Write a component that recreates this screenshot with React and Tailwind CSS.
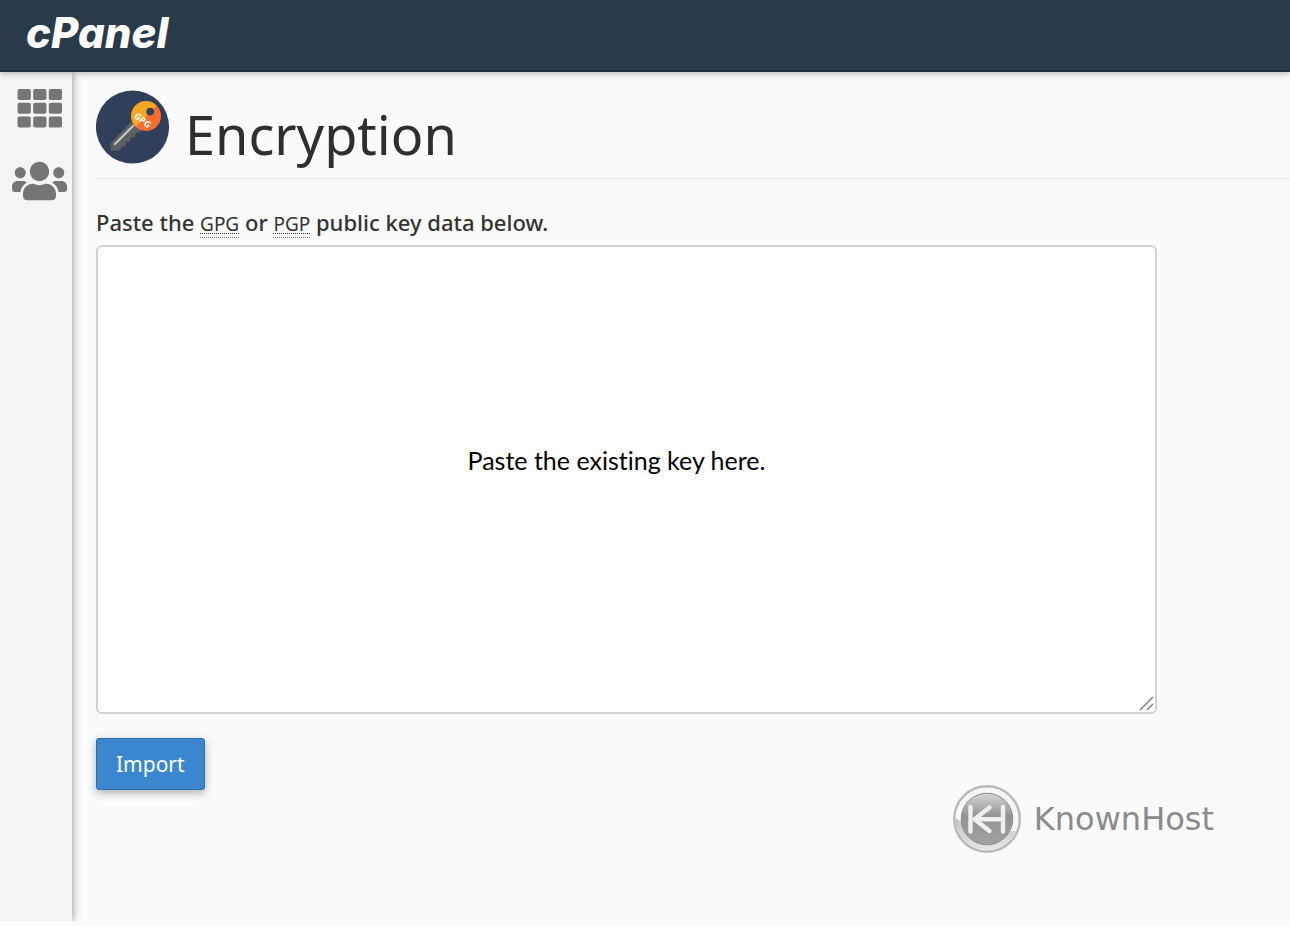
import { useState } from "react";
import { FaUsers } from "react-icons/fa";

export default function App() {
  return (
    <div className="min-h-screen flex flex-col bg-[#fcfcfc] pb-[5px] font-['Noto_Sans','Open_Sans',sans-serif] text-[#333]">
      <Header />
      <div className="flex-1 flex">
        <Sidebar />
        <main className="min-w-0 flex-1 bg-[#fafafa] pl-6 pt-[18px] flex flex-col">
          <PageTitle />
          <ImportKeyForm />
          <KnownHostLogo />
        </main>
      </div>
    </div>
  );
}

function Header() {
  return (
    <header className="relative z-20 h-[72px] px-[26px] flex items-start bg-[#293a4a] border-b-2 border-[#213040] shadow-[0_2px_6px_rgba(0,0,0,0.25)]">
      <a
        href="#home"
        className="pt-1 font-['Inter',sans-serif] text-[42px] leading-[58px] font-extrabold italic text-white"
      >
        cPanel
      </a>
    </header>
  );
}

function Sidebar() {
  return (
    <nav className="relative z-10 w-[72px] shrink-0 flex flex-col items-center gap-[31px] pt-[17px] pl-[7px] bg-[#f4f4f4] text-[#757575] shadow-[2px_0_7px_rgba(0,0,0,0.3)] [clip-path:inset(0_-12px_0_0)]">
      <a href="#tools" aria-label="Tools">
        <GridIcon />
      </a>
      <a href="#users" aria-label="User Manager">
        <FaUsers className="w-[55px] h-[44px]" />
      </a>
    </nav>
  );
}

function GridIcon() {
  return (
    <svg width="46" height="39" viewBox="0 0 46 39" fill="currentColor" aria-hidden="true">
      {[0, 13.8, 27.6].map((y) =>
        [0, 15.6, 31.2].map((x) => (
          <rect key={`${x}-${y}`} x={x + 0.6} y={y} width="13.2" height="11" rx="1.8" />
        ))
      )}
    </svg>
  );
}

function PageTitle() {
  return (
    <div className="flex items-start gap-[15px] pb-[14px] border-b border-[#e8e8e8]">
      <KeyIcon />
      <h1 className="text-[54px] leading-[74px] pt-[7px] -mb-[7px] text-[#2f2f2f]">Encryption</h1>
    </div>
  );
}

function KeyIcon() {
  return (
    <svg width="74" height="74" viewBox="0 0 74 74" className="shrink-0" aria-hidden="true">
      <defs>
        <linearGradient id="keyHead" x1="0" y1="0" x2="1" y2="1">
          <stop offset="0.5" stopColor="#f6a623" />
          <stop offset="0.5" stopColor="#ff6c2c" />
        </linearGradient>
      </defs>
      <circle cx="36.5" cy="37" r="36.6" fill="#30405b" />
      {/* blade */}
      <path
        d="M35 32 L14.7 53.5 V60.5 H24 L25.5 56.5 L29.5 56 L30 52 L34 51.5 L34.5 47.5 L38.5 47.5 L39.5 43.5 L46 41 Z"
        fill="#5d5e60"
      />
      <path d="M19 54 L37 36" stroke="#c4c8d0" strokeWidth="2.2" strokeLinecap="round" />
      {/* head */}
      <path
        fillRule="evenodd"
        d="M50 11a15 15 0 1 0 0 30a15 15 0 1 0 0-30ZM54.2 17.7a3.9 3.9 0 1 1 0 7.8a3.9 3.9 0 1 1 0-7.8Z"
        fill="url(#keyHead)"
      />
      <text
        x="47"
        y="33.5"
        fontSize="9"
        fontWeight="700"
        fontFamily="Open Sans, sans-serif"
        textAnchor="middle"
        fill="#fff"
        transform="rotate(38 47 30)"
      >
        GPG
      </text>
    </svg>
  );
}

function ImportKeyForm() {
  const [keyData, setKeyData] = useState("");

  return (
    <form className="pt-[26px] pr-[133px]" onSubmit={(e) => e.preventDefault()}>
      <label htmlFor="key-data" className="block text-[22px] leading-[34px] font-medium">
        Paste the <Abbr title="GNU Privacy Guard">GPG</Abbr> or{" "}
        <Abbr title="Pretty Good Privacy">PGP</Abbr> public key data below.
      </label>
      <div className="relative mt-1">
        <textarea
          id="key-data"
          value={keyData}
          onChange={(e) => setKeyData(e.target.value)}
          placeholder="Paste the existing key here."
          className="block w-full h-[469px] pt-[195px] pl-4 pr-9 resize-none text-center font-['Lato',sans-serif] text-[25px] leading-9 [font-variant-ligatures:none] text-black placeholder:text-black bg-white border-2 border-[#d2d2d2] rounded-md focus:outline-none focus:border-[#66afe9]"
        />
        <svg
          width="15"
          height="15"
          viewBox="0 0 15 15"
          className="absolute right-[3px] bottom-[3px] pointer-events-none"
          stroke="#808080"
          strokeWidth="1.5"
          aria-hidden="true"
        >
          <path d="M1 14L14 1M8 14L14 8" />
        </svg>
      </div>
      <button
        type="submit"
        className="mt-6 h-[52px] px-[19px] text-[21px] leading-[30px] text-white bg-[#3a87cf] border border-[#2a6fae] rounded-[3px] shadow-[0_3px_8px_rgba(0,0,0,0.3)] hover:bg-[#2f77bb]"
      >
        Import
      </button>
    </form>
  );
}

function Abbr({ title, children }) {
  return (
    <abbr
      title={title}
      className="text-[19px] font-normal cursor-help underline decoration-dotted decoration-1 underline-offset-2 border-b border-dotted border-[#777]"
    >
      {children}
    </abbr>
  );
}

function KnownHostLogo() {
  return (
    <div className="self-end mr-[76px] -mt-[6px] flex items-center gap-3 text-[#8b8b8b]">
      <svg width="70" height="70" viewBox="0 0 70 70" className="shrink-0" aria-hidden="true">
        <defs>
          <linearGradient id="bevel" x1="0" y1="0" x2="0" y2="1">
            <stop offset="0" stopColor="#c2c2c2" />
            <stop offset="1" stopColor="#e6e6e6" />
          </linearGradient>
          <linearGradient id="disc" x1="0" y1="0" x2="0" y2="1">
            <stop offset="0" stopColor="#d6d6d6" />
            <stop offset="0.45" stopColor="#929292" />
            <stop offset="1" stopColor="#a2a2a2" />
          </linearGradient>
        </defs>
        <circle cx="35" cy="35" r="32" fill="#f7f7f7" />
        {/* lower half of the bevel */}
        <path d="M3.5 34L11 39L58 47L64 47A31.5 31.5 0 0 1 3.5 34Z" fill="url(#bevel)" />
        <circle cx="35" cy="35" r="32.8" fill="none" stroke="#b8b8b8" strokeWidth="2.4" />
        <circle cx="35" cy="35" r="25.8" fill="url(#disc)" stroke="#8e8e8e" strokeWidth="1" />
        <g stroke="#efefef" strokeWidth="4.4" strokeLinecap="round" strokeLinejoin="round" fill="none">
          <path d="M18.5 23V47.5" />
          <path d="M51 23V47.5" />
          <path d="M37.5 23.5L22.5 35.2L37.5 47" />
          <path d="M24 35.2H51" />
        </g>
      </svg>
      <span className="font-['DejaVu_Sans',sans-serif] text-[32px] leading-9">KnownHost</span>
    </div>
  );
}
